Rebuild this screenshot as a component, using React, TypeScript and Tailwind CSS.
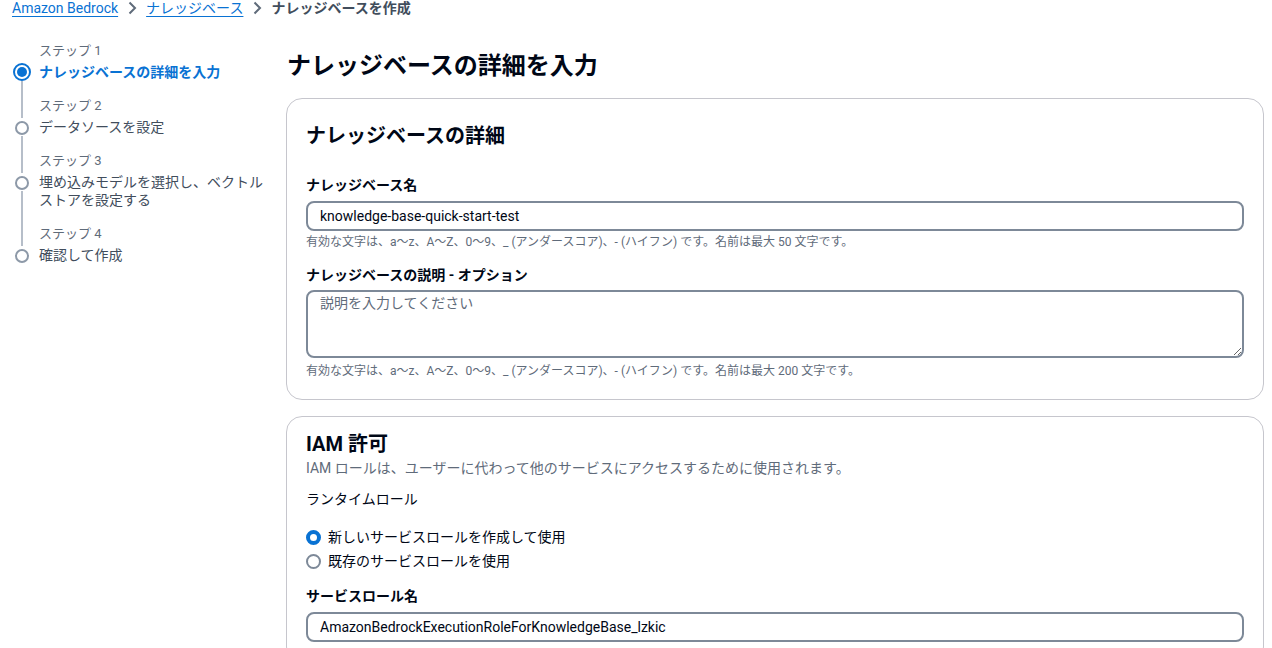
import React from 'react'

const font = { fontFamily: "Roboto, 'Noto Sans CJK JP', sans-serif" }

interface Step {
  label: string
  title: string
  active?: boolean
}

const steps: Step[] = [
  { label: 'ステップ 1', title: 'ナレッジベースの詳細を入力', active: true },
  { label: 'ステップ 2', title: 'データソースを設定' },
  { label: 'ステップ 3', title: '埋め込みモデルを選択し、ベクトルストアを設定する' },
  { label: 'ステップ 4', title: '確認して作成' },
]

function Chevron() {
  return (
    <svg width="16" height="16" viewBox="0 0 16 16" className="mx-[6px] text-[#5f6b7a]">
      <path d="M5.5 2.5 11 8l-5.5 5.5" fill="none" stroke="currentColor" strokeWidth="2" />
    </svg>
  )
}

function StepNav() {
  return (
    <nav className="w-[286px] shrink-0 pt-[25px] pl-[13px]">
      {steps.map((step, i) => {
        const last = i === steps.length - 1
        return (
          <div key={step.label}>
            <div className="flex">
              <div className="w-[18px] flex justify-center">
                {i > 0 && <div className="w-[2px] bg-[#b6bec9]" />}
              </div>
              <div className="pl-[8px] text-[13px] leading-[20px] text-[#5f6b7a]">{step.label}</div>
            </div>
            <div className="flex">
              <div className="w-[18px] flex flex-col items-center">
                <div className="w-[2px] h-[2px] bg-[#b6bec9]" style={{ opacity: i > 0 ? 1 : 0 }} />
                {step.active ? (
                  <div className="w-[18px] h-[18px] rounded-full border-2 border-[#0972d3] flex items-center justify-center">
                    <div className="w-[10px] h-[10px] rounded-full bg-[#0972d3]" />
                  </div>
                ) : (
                  <div className="mt-[3px] mb-[1px] w-[14px] h-[14px] rounded-full border-2 border-[#8d99a8]" />
                )}
                {!last && <div className="w-[2px] flex-1 bg-[#b6bec9]" />}
              </div>
              <div
                className={`pl-[8px] pt-[2px] text-[14px] leading-[18px] w-[240px] ${
                  step.active ? 'font-bold text-[#0972d3]' : 'text-[#414d5c]'
                } ${last ? '' : 'pb-[15px]'}`}
              >
                {step.title}
              </div>
            </div>
          </div>
        )
      })}
    </nav>
  )
}

function Hint({ children, top = 'mt-[3px]' }: { children: React.ReactNode; top?: string }) {
  return <p className={`${top} text-[12px] leading-[16px] text-[#5f6b7a]`}>{children}</p>
}

function Label({ children }: { children: React.ReactNode }) {
  return <div className="text-[14px] leading-[20px] font-bold text-[#000716]">{children}</div>
}

function TextInput({ value }: { value: string }) {
  return (
    <input
      readOnly
      value={value}
      className="mt-[6px] block w-full h-[30px] px-[12px] rounded-[8px] border-2 border-[#7d8998] text-[14px] text-[#000716] outline-none"
      style={font}
    />
  )
}

function Radio({ checked, children }: { checked?: boolean; children: React.ReactNode }) {
  return (
    <label className="flex items-center h-[24px] gap-[7px] text-[14px] text-[#000716]">
      {checked ? (
        <span className="w-[15px] h-[15px] rounded-full border-[4px] border-[#0972d3] bg-white" />
      ) : (
        <span className="w-[15px] h-[15px] rounded-full border-2 border-[#7d8998] bg-white" />
      )}
      {children}
    </label>
  )
}

export default function App() {
  return (
    <div className="w-[1272px] h-[648px] overflow-hidden bg-white text-[#000716]" style={font}>
      <div className="h-[16px] pl-[12px] flex items-center text-[14px] leading-[16px]">
        <a className="text-[#0972d3] underline decoration-[#0972d3] underline-offset-[3px]">Amazon Bedrock</a>
        <Chevron />
        <a className="text-[#0972d3] underline decoration-[#0972d3] underline-offset-[3px]">ナレッジベース</a>
        <Chevron />
        <span className="font-bold text-[#414d5c]">ナレッジベースを作成</span>
      </div>

      <div className="flex">
        <StepNav />

        <main className="flex-1 pr-[8px]">
          <h1 className="mt-[34px] pl-[1px] text-[24px] leading-[32px] font-bold">ナレッジベースの詳細を入力</h1>

          <section className="mt-[16px] rounded-[16px] border border-[#c6c6cd] px-[19px] pt-[23px] pb-[20px]">
            <h2 className="text-[20px] leading-[28px] font-bold">ナレッジベースの詳細</h2>

            <div className="mt-[25px]">
              <Label>ナレッジベース名</Label>
              <TextInput value="knowledge-base-quick-start-test" />
              <Hint>有効な文字は、a〜z、A〜Z、0〜9、_ (アンダースコア)、- (ハイフン) です。名前は最大 50 文字です。</Hint>
            </div>

            <div className="mt-[15px]">
              <Label>ナレッジベースの説明 - オプション</Label>
              <textarea
                readOnly
                placeholder="説明を入力してください"
                className="mt-[5px] block w-full h-[68px] px-[12px] py-[1px] rounded-[8px] border-2 border-[#7d8998] text-[14px] leading-[20px] placeholder:text-[#5f6b7a] outline-none"
                style={font}
              />
              <Hint top="mt-[5px]">有効な文字は、a〜z、A〜Z、0〜9、_ (アンダースコア)、- (ハイフン) です。名前は最大 200 文字です。</Hint>
            </div>
          </section>

          <section className="mt-[16px] rounded-[16px] border border-[#c6c6cd] px-[19px] pt-[13px] pb-[20px]">
            <h2 className="text-[20px] leading-[28px] font-bold">IAM 許可</h2>
            <p className="text-[14px] leading-[20px] text-[#5f6b7a]">
              IAM ロールは、ユーザーに代わって他のサービスにアクセスするために使用されます。
            </p>

            <div className="mt-[11px] text-[14px] leading-[20px]">ランタイムロール</div>

            <div className="mt-[16px] flex flex-col">
              <Radio checked>新しいサービスロールを作成して使用</Radio>
              <Radio>既存のサービスロールを使用</Radio>
            </div>

            <div className="mt-[13px]">
              <Label>サービスロール名</Label>
              <TextInput value="AmazonBedrockExecutionRoleForKnowledgeBase_lzkic" />
            </div>
          </section>
        </main>
      </div>
    </div>
  )
}
